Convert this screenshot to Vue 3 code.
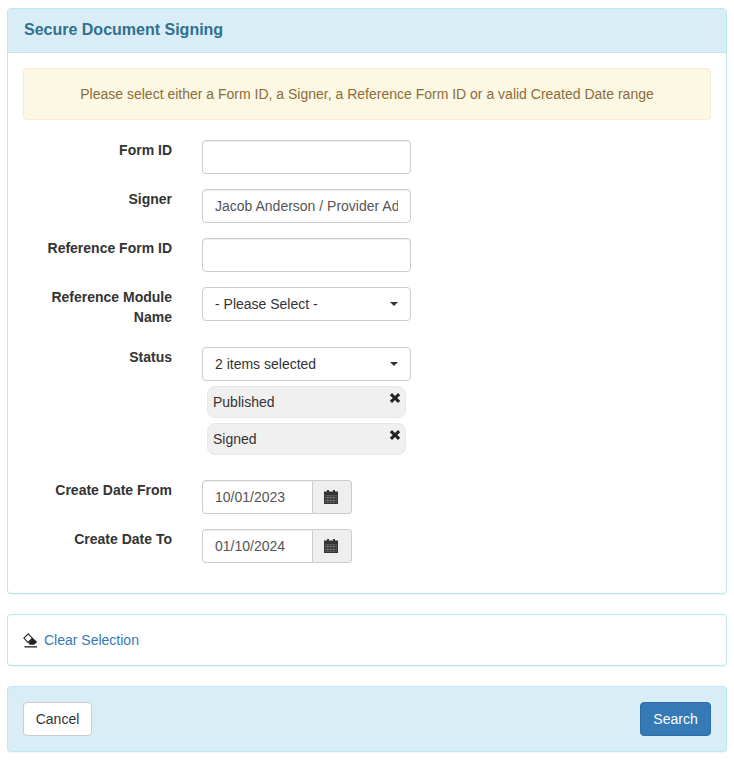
<script setup>
const rows = [
  { label: 'Form ID', value: '' },
  { label: 'Signer', value: 'Jacob Anderson / Provider Admin' },
  { label: 'Reference Form ID', value: '' },
]
const chips = ['Published', 'Signed']
const dates = [
  { label: 'Create Date From', value: '10/01/2023' },
  { label: 'Create Date To', value: '01/10/2024' },
]
</script>

<template>
  <div class="page">
    <section class="panel">
      <h3 class="panel-heading">Secure Document Signing</h3>
      <div class="panel-body">
        <div class="alert">Please select either a Form ID, a Signer, a Reference Form ID or a valid Created Date range</div>
        <div v-for="r in rows" :key="r.label" class="group">
          <label class="lbl">{{ r.label }}</label>
          <input class="control" type="text" :value="r.value" />
        </div>
        <div class="group">
          <label class="lbl">Reference Module Name</label>
          <button class="control select" type="button"><span>- Please Select -</span><i class="caret"></i></button>
        </div>
        <div class="group">
          <label class="lbl">Status</label>
          <div>
            <button class="control select" type="button"><span>2 items selected</span><i class="caret"></i></button>
            <div v-for="c in chips" :key="c" class="chip">
              <span>{{ c }}</span>
              <svg class="x" viewBox="0 0 12 12" width="12" height="12"><path d="M3 1 6 4 9 1 11.2 3.2 8.2 6 11.2 8.8 9 11 6 8 3 11 0.8 8.8 3.8 6 0.8 3.2Z" fill="#222"/></svg>
            </div>
            <div class="chip-end"></div>
          </div>
        </div>
        <div v-for="d in dates" :key="d.label" class="group">
          <label class="lbl">{{ d.label }}</label>
          <div class="input-group">
            <input class="control date" type="text" :value="d.value" />
            <span class="addon">
              <svg viewBox="0 0 14 14" width="14" height="14"><path fill="#333" d="M3 0h2v1.5h4V0h2v1.5h3V14H0V1.5h3Z"/><path fill="#8a8a8a" d="M1 5.5h12V13H1Z"/><path fill="#333" d="M1.2 5.7h2.4v1.8H1.2Zm3 0h2.4v1.8H4.2Zm3 0h2.4v1.8H7.2Zm3 0h2.6v1.8h-2.6ZM1.2 8.1h2.4v1.8H1.2Zm3 0h2.4v1.8H4.2Zm3 0h2.4v1.8H7.2Zm3 0h2.6v1.8h-2.6ZM1.2 10.5h2.4v2.3H1.2Zm3 0h2.4v2.3H4.2Zm3 0h2.4v2.3H7.2Zm3 0h2.6v2.3h-2.6Z"/></svg>
            </span>
          </div>
        </div>
      </div>
    </section>

    <section class="panel">
      <div class="panel-body clear">
        <svg class="eraser" viewBox="0 0 15 15" width="15" height="15">
          <path fill="#fff" stroke="#222" stroke-width="1.1" d="M5.2 0.8 0.9 5 5 9.4 9.4 5.2Z"/>
          <path fill="#222" d="M9.6 4.8 14.2 9 11.2 11.8H6.8L5.5 10Z"/>
          <path fill="#222" d="M1.5 13.2h12.5v1.3H1.5Z"/>
        </svg>
        <a class="link">Clear Selection</a>
      </div>
    </section>

    <section class="panel footer">
      <button class="btn cancel" type="button">Cancel</button>
      <button class="btn primary" type="button">Search</button>
    </section>
  </div>
</template>

<style>
html, body { margin: 0; background: #fff; }
</style>

<style scoped>
.page {
  padding: 8px 7px 0;
  font-family: "Liberation Sans", Arial, sans-serif;
  font-size: 14px;
  line-height: 20px;
  color: #333;
}
.panel {
  border: 1px solid #bce8f1;
  border-radius: 4px;
  margin-bottom: 20px;
  background: #fff;
  box-shadow: 0 1px 1px rgba(0, 0, 0, 0.05);
}
.panel-heading {
  margin: 0;
  padding: 10px 15px 11px 16px;
  font-size: 16px;
  font-weight: 700;
  line-height: 22px;
  color: #31708f;
  background: #d9edf7;
  border-bottom: 1px solid #bce8f1;
  border-radius: 3px 3px 0 0;
}
.panel-body { padding: 15px; }
.alert {
  margin-bottom: 20px;
  padding: 15px;
  text-align: center;
  color: #8a6d3b;
  background: #fcf8e3;
  border: 1px solid #faebcc;
  border-radius: 4px;
}
.group {
  display: grid;
  grid-template-columns: 149px 209px;
  column-gap: 30px;
  margin-bottom: 15px;
}
.lbl {
  display: block;
  margin-bottom: 5px;
  font-weight: 700;
  text-align: right;
}
.control {
  display: block;
  box-sizing: border-box;
  width: 100%;
  height: 34px;
  padding: 6px 12px;
  font: inherit;
  color: #555;
  background: #fff;
  border: 1px solid #ccc;
  border-radius: 4px;
  box-shadow: inset 0 1px 1px rgba(0, 0, 0, 0.075);
  outline: none;
}
.select {
  display: flex;
  align-items: center;
  justify-content: space-between;
  color: #333;
  text-align: left;
  box-shadow: none;
}
.caret {
  width: 0;
  height: 0;
  border-top: 4px solid #333;
  border-left: 4px solid transparent;
  border-right: 4px solid transparent;
}
.chip {
  box-sizing: border-box;
  display: flex;
  justify-content: space-between;
  align-items: flex-start;
  height: 32px;
  margin: 5px 5px 0;
  padding: 5px 4px 5px 5px;
  background: #f0f0f0;
  border: 1px solid #e8e8e8;
  border-radius: 8px;
}
.chip-end { height: 10px; }
.x { margin-top: 0; }
.input-group { display: flex; width: 150px; }
.date {
  width: 111px;
  flex: none;
  border-radius: 4px 0 0 4px;
}
.addon {
  display: flex;
  align-items: center;
  justify-content: center;
  width: 39px;
  box-sizing: border-box;
  height: 34px;
  padding-right: 2px;
  background: #eee;
  border: 1px solid #ccc;
  border-left: 0;
  border-radius: 0 4px 4px 0;
}
.clear { display: flex; align-items: center; }
.eraser { margin-right: 6px; flex: none; }
.link { color: #337ab7; }
.footer {
  display: flex;
  justify-content: space-between;
  padding: 15px;
  background: #d9edf7;
}
.btn {
  box-sizing: border-box;
  width: 71px;
  height: 34px;
  padding: 6px 0;
  font: inherit;
  color: #333;
  background: #fff;
  border: 1px solid #ccc;
  border-radius: 4px;
}
.cancel { width: 69px; }
.primary {
  color: #fff;
  background: #337ab7;
  border-color: #2e6da4;
}
</style>
